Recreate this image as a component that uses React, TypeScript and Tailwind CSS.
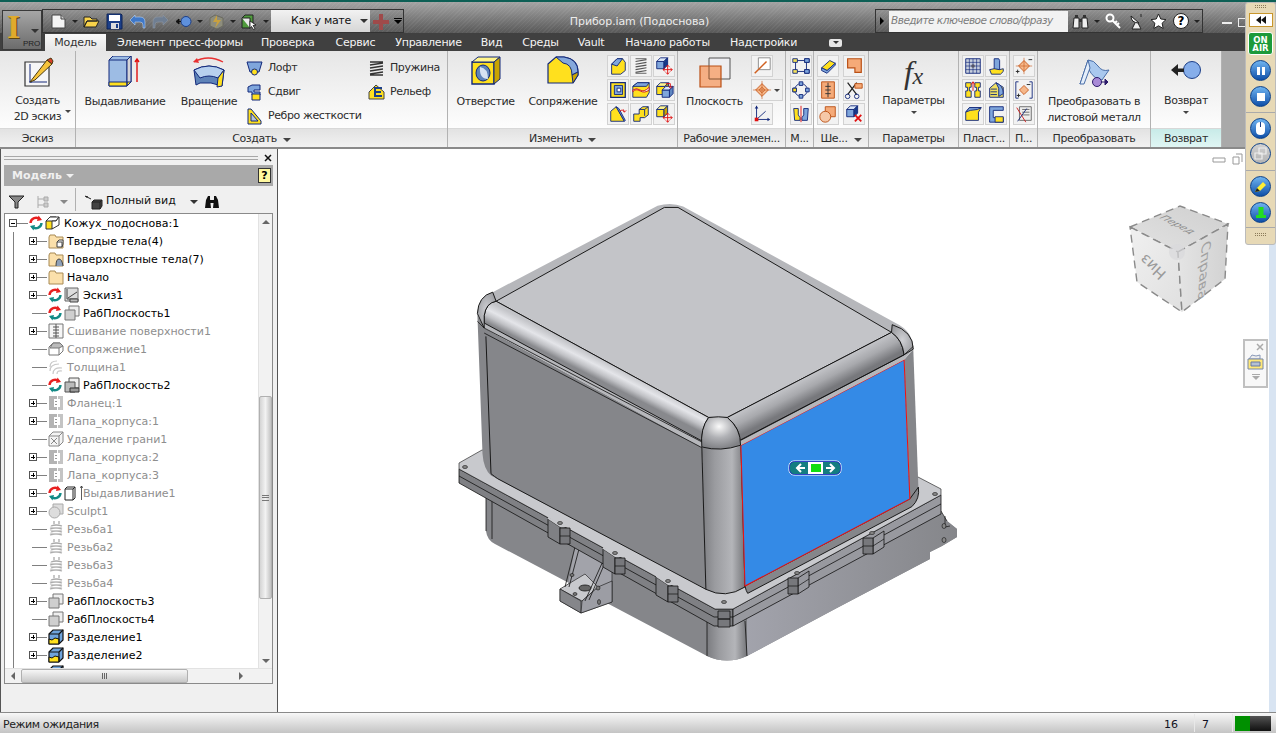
import React from "react";

const N = "#12287a", Y = "#ffe01e", B = "#7fa6dc";

function Cube({ x, y, s, d = 4, f = Y, t = "#fff48a", r = "#c9a400", k = N }: { x: number; y: number; s: number; d?: number; f?: string; t?: string; r?: string; k?: string }) {
  return (
    <g stroke={k} strokeWidth="1" strokeLinejoin="round">
      <path d={`M${x} ${y}h${s}v${s}h-${s}z`} fill={f} />
      <path d={`M${x} ${y}l${d} -${d}h${s}l-${d} ${d}z`} fill={t} />
      <path d={`M${x + s} ${y}l${d} -${d}v${s}l-${d} ${d}z`} fill={r} />
    </g>
  );
}
const Cross = ({ x, y }: { x: number; y: number }) => (
  <path d={`M${x - 5} ${y}h10M${x} ${y - 5}v10M${x - 3} ${y - 2}l-2 2 2 2M${x + 3} ${y - 2}l2 2-2 2M${x - 2} ${y - 3}l2-2 2 2M${x - 2} ${y + 3}l2 2 2-2`} stroke="#e01010" strokeWidth="1" fill="none" />
);

const tileIcons: Record<string, React.ReactNode> = {
  chamfer: <g><path d="M4 9l6-6h6l3 4v9l-5 4H4z" fill={Y} stroke={N} /><path d="M4 9l6-6h6l-6 8z" fill={B} stroke={N} /></g>,
  coil: <g fill="none" stroke="#555"><path d="M5 3h12M5 19h12" /><path d="M5 6l12-2M5 9l12-2M5 12l12-2M5 15l12-2M5 18l12-2" strokeWidth="1.2" /></g>,
  move: <g><Cube x={3} y={6} s={8} f={B} t="#dce8f8" r="#163a8a" /><Cross x={15} y={15} /></g>,
  pocket: <g><path d="M3 3h16v16H3z" fill={Y} stroke={N} strokeWidth="1.4" /><path d="M7 6h9v10H7z" fill={B} stroke={N} /><path d="M10 9h4v4h-4z" fill="#fff" stroke={N} /></g>,
  split: <g><path d="M2 7l5-4h13v11l-3 5H2z" fill={Y} stroke={N} /><path d="M2 7l5-4h13l-3 4z" fill={B} stroke={N} /><path d="M2 11q4-3 8 0t10-3v3q-5 4-10 1t-8 1z" fill="#e8e8e8" stroke="#d01818" /></g>,
  scale: <g><Cube x={3} y={7} s={9} /><Cube x={9} y={11} s={8} f={B} t="#dce8f8" r="#5f86c0" /><path d="M13 4h5v4M16 7l2 2 2-2" stroke="#e01010" fill="none" /></g>,
  draft: <g><path d="M3 8l6-5 9 16H3z" fill={Y} stroke={N} /><path d="M9 3l3 2 7 13-1 1z" fill={B} stroke={N} /><path d="M13 8q3-3 5 1M17 6l1 3 2-2" stroke="#e01010" fill="none" /></g>,
  combine: <g><path d="M3 11h6V6l4-3h6v9l-4 3h-5v4H3z" fill={Y} stroke={N} /><path d="M9 6h6l4-3M15 6v7" stroke={N} fill="none" /></g>,
  move2: <g><Cube x={3} y={6} s={8} /><Cross x={15} y={15} /></g>,
  axis: <g><path d="M7 2h13v13H7z" fill="#fff" stroke="#888" /><path d="M3 19L16 6" stroke="#d06020" strokeWidth="1.6" /></g>,
  point: <g><path d="M11 4l7 7-7 7-7-7z" fill="#f5b78a" stroke="#c85c20" /><path d="M11 8l3 3-3 3-3-3z" fill="none" stroke="#c85c20" /><path d="M11 1v20M1 11h20" stroke="#c85c20" strokeWidth=".7" /></g>,
  ucs: <g><path d="M5 2v15h14M5 17L15 8" stroke="#12287a" fill="none" /><path d="M3 15h4v4H3z" fill="#e01010" /><path d="M5 2l-2 3h4zM20 17l-3-2v4z" fill="#12287a" /></g>,
  rect: <g><path d="M5 5h12v12H5z" fill="none" stroke={N} /><path d="M2 3h5v4H2zM15 3h5v4h-5zM2 15h5v4H2zM15 15h5v4h-5z" fill="#f6e25a" stroke={N} /><path d="M15 3h5v4h-5zM15 15h5v4h-5z" fill={B} stroke={N} /></g>,
  circ: <g><circle cx="11" cy="11" r="7" fill="none" stroke={N} /><path d="M9 2h4v4H9zM2 9h4v4H2zM16 9h4v4h-4zM9 16h4v4H9z" fill={B} stroke={N} /><path d="M2 9h4v4H2z" fill={Y} stroke={N} /></g>,
  mirror: <g><path d="M3 5h5v7l2 3v3H4z" fill={Y} stroke={N} /><path d="M19 5h-5v7l-2 3v3h6z" fill={B} stroke={N} /><path d="M11 2v18" stroke="#e01010" /></g>,
  plate: <g><path d="M4 13l9-8 6 3-9 8z" fill={Y} stroke={N} /><path d="M4 13v3l6 3 9-9V8l-9 8z" fill={B} stroke={N} /></g>,
  lflange: <g><path d="M4 3h15v15h-7v-5H4z" fill="#f5aa78" stroke="#b94f14" strokeWidth="1.3" /></g>,
  doc: <g><path d="M4 2h14v18H4z" fill="#f5aa78" stroke="#b94f14" /><path d="M11 3v16M8 7h6M8 11h6M8 15h6" stroke="#333" /></g>,
  cut: <g><path d="M4 3l10 13M14 3L4 16" stroke="#222" strokeWidth="1.4" /><circle cx="4" cy="18" r="2.5" fill="none" stroke={N} /><circle cx="14" cy="18" r="2.5" fill="none" stroke={N} /><path d="M12 4h8v5h-8z" fill="#f5aa78" stroke="#b94f14" /></g>,
  corner: <g><path d="M8 3h11v11H8z" fill="#f5aa78" stroke="#b94f14" /><circle cx="8" cy="14" r="6" fill="#f5c8a8" stroke="#b94f14" /></g>,
  del: <g><Cube x={3} y={6} s={8} f={B} t="#dce8f8" r="#163a8a" /><path d="M12 12l7 7M19 12l-7 7" stroke="#e01010" strokeWidth="2" /></g>,
  grid: <g><path d="M3 3h16v16H3z" fill="#c6cedc" stroke={N} /><path d="M3 7h16M3 11h16M3 15h16M7 3v16M11 3v16M15 3v16" stroke={N} strokeWidth=".7" /><circle cx="11" cy="11" r="2" fill="#556" /></g>,
  boss: <g><path d="M9 3h5l1 2v10h-6z" fill={B} stroke={N} /><path d="M4 15l5-1 6 1 4-1v3l-3 3H6z" fill={Y} stroke={N} /></g>,
  rules: <g><path d="M3 3h6v5H7v4h2v7H3v-7h2V8H3zM13 3h6v5h-2v4h2v7h-6v-7h2V8h-2z" fill={Y} stroke={N} /><path d="M11 2v10M9 5l2-3 2 3" stroke="#e01010" fill="none" /></g>,
  mold: <g><path d="M4 19V9l7-6 8 5v11z" fill="#f0e060" stroke={N} /><path d="M11 3q8 3 8 12l-5 3V9z" fill={B} stroke={N} /><path d="M5 10h7M5 13h7M5 16h7" stroke={N} /></g>,
  chamf2: <g><path d="M3 9l4-5h13l-3 5v9H3z" fill={Y} stroke={N} /><path d="M3 9l4-5h13l-4 2-8 1z" fill={B} stroke={N} /></g>,
  lip: <g><path d="M4 3h15v4H8v8h11v5H4z" fill={B} stroke={N} /><path d="M10 14h9v6h-9z" fill={Y} stroke={N} /></g>,
  pm: <g><path d="M11 5l6 6-6 6-6-6z" fill="#f5b78a" stroke="#c85c20" /><path d="M11 2v18M2 11h18" stroke="#c85c20" strokeWidth=".7" /><path d="M16 4h4M2 17h4M4 15v4" stroke="#222" /></g>,
  bracket: <g><path d="M11 6l5 5-5 5-5-5z" fill="#f5b78a" stroke="#c85c20" /><path d="M5 2H2v18h3M17 2h3v18h-3" stroke={N} fill="none" /><path d="M14 5h4M3 17h4M5 15v4" stroke="#222" /></g>,
  hatch: <g><path d="M6 3h13v15H6z" fill="#eee" stroke="#666" /><path d="M9 6h8M9 9h8M9 12h8" stroke="#666" /><path d="M3 4l10 16" stroke="#d01818" /><path d="M14 5L4 19" stroke={N} /></g>,
};

const Caret = () => <div className="w-0 h-0 border-x-[3px] border-t-[3px] border-x-transparent border-t-[#444444]" />;

const Tile = ({ n, wide }: { n: string; wide?: boolean }) => (
  <div className={`h-[22px] ${wide ? "w-[32px]" : "w-[22px]"} flex items-center bg-[#f2f2f2] border border-[#d2d2d2]`}>
    <svg width="20" height="20" viewBox="0 0 22 22" className="shrink-0">{tileIcons[n]}</svg>
    {wide && <div className="ml-[2px]"><Caret /></div>}
  </div>
);

const TileGrid = ({ rows, className = "" }: { rows: string[][]; className?: string }) => (
  <div className={`flex flex-col gap-y-[2px] shrink-0 ${className}`}>
    {rows.map((r, i) => (
      <div key={i} className="flex gap-x-[1px]">{r.map((n) => <Tile key={n} n={n} wide={n === "point"} />)}</div>
    ))}
  </div>
);

const Big = ({ icon, lines, caret, w }: { icon: React.ReactNode; lines: string[]; caret?: boolean; w: string }) => (
  <div className={`flex flex-col items-center shrink-0 ${w}`}>
    <div className={`${caret ? "h-[37px]" : "h-[38px]"} flex items-start justify-center`}>{icon}</div>
    {lines.map((l) => <div key={l} className="leading-[16px] whitespace-nowrap">{l}</div>)}
    {caret && <div className="mt-[2px]"><Caret /></div>}
  </div>
);

const Panel = ({ w, title, drop, children, active }: { w: string; title: string; drop?: boolean; children: React.ReactNode; active?: boolean }) => (
  <div className={`${w} shrink-0 flex flex-col border-r border-[#b2b2b2]`}>
    <div className="h-[77px] flex pt-[5px] bg-linear-to-b from-[#e6e6e6] to-[#fdfdfd]">{children}</div>
    <div className={`h-[19px] flex items-center justify-center gap-[6px] pt-[3px] border-t border-[#d8d8d8] whitespace-nowrap ${active ? "bg-linear-to-b from-[#c8ebe8] to-[#e0f6f4]" : "bg-linear-to-b from-[#e2e2e2] to-[#f2f2f2]"}`}>
      <span>{title}</span>
      {drop && <div className="w-0 h-0 border-x-[4px] border-t-[4px] border-x-transparent border-t-[#444444]" />}
    </div>
  </div>
);

const SmallRow = ({ icon, text }: { icon: React.ReactNode; text: string }) => (
  <div className="h-[24px] flex items-center gap-[5px] whitespace-nowrap">
    <svg width="17" height="17" viewBox="0 0 17 17" className="shrink-0">{icon}</svg>
    <span className="pt-[1px]">{text}</span>
  </div>
);

const Sync = () => (
  <svg width="16" height="16" viewBox="0 0 16 16" className="shrink-0">
    <path d="M2.500 8a5.500 5.500 0 0 1 9.500-3.500" stroke="#e82020" strokeWidth="2.400" fill="none" />
    <path d="M10.500 .5l3.500 4.500-5 1z" fill="#e82020" />
    <path d="M13.500 8a5.500 5.500 0 0 1-9.500 3.500" stroke="#138a86" strokeWidth="2.400" fill="none" />
    <path d="M5.500 15.500l-3.500-4.500 5-1z" fill="#138a86" />
  </svg>
);

const folder = (extra?: React.ReactNode) => (
  <g>
    <path d="M1 4l1-2h5l1 2h7v11H1z" fill="#fbe0ab" stroke="#a88a54" />
    {extra}
  </g>
);
const treeIcons: Record<string, React.ReactNode> = {
  part: <g><path d="M1 6l4-4h6v8l-4 4H1z" fill={Y} stroke="#333" /><path d="M5 2h9l-3 4H1z" fill="#fff" stroke="#333" /><path d="M11 6l3-4v8l-7 4v-8z" fill="#fff" stroke="#333" /></g>,
  solid: folder(<path d="M9 9h5v5H9zM9 9l2-2h4v4l-1 3" fill="#fff" stroke="#444" />),
  surf: folder(<path d="M8 15q0-7 3-7t4 7" fill="#8ea0b8" stroke="#444" />),
  folder: folder(),
  sketch: <g><path d="M1 1h13v13H1z" fill="#ddd" stroke="#666" /><path d="M3 2v10M3 12h10M4 11L13 5" stroke="#444" /><path d="M6 12h8v3H6z" fill="#bbb" stroke="#444" /></g>,
  plane: <g><path d="M5 1h10v10H5z" fill="#eee" stroke="#777" /><path d="M1 5h10v10H1z" fill="#cfcfcf" stroke="#777" /></g>,
  plane2: <g><path d="M5 1h10v10H5z" fill="#eee" stroke="#555" /><path d="M1 5h10v10H1z" fill="#bbb" stroke="#555" /><path d="M6 11h9v4H6z" fill="#999" stroke="#333" /></g>,
  stitch: <g><path d="M1 1h14v14H1z" fill="#f6f6f6" stroke="#777" /><path d="M8 1v14M5 4h6M5 7h6M5 10h6M5 13h6" stroke="#555" /></g>,
  fillet: <g><path d="M1 6l4-4h7l3 3v5l-4 4H1z" fill="#fff" stroke="#777" /><path d="M5 2h7l3 3-4 2H2z" fill="#bbb" stroke="#777" /><path d="M11 7v7" stroke="#777" /></g>,
  thick: <g fill="none" stroke="#c8c8c8" strokeWidth="1.200"><path d="M2 8q0-6 7-6M2 12q0-7 9-7M5 15q0-7 9-6M9 15q0-4 5-3" /></g>,
  flange: <g><path d="M1 1h8v3H6v8h3v3H1z" fill="#b4b4b4" /><path d="M10 1h5v14h-5v-3h2V4h-2z" fill="#c4c4c4" /><path d="M7 6h2v1H7zM7 9h2v1H7z" fill="#999" /></g>,
  del: <g><path d="M1 5l4-4h10v10l-4 4H1z" fill="#f4f4f4" stroke="#888" /><path d="M1 5h10v10M11 5l4-4M3 7l6 6M9 7l-6 6" fill="none" stroke="#888" /></g>,
  ext: <g><path d="M1 4l2-2h8v11l-2 2H1z" fill="#fff" stroke="#222" /><path d="M1 4h8v11M9 4l2-2" fill="none" stroke="#222" /></g>,
  sculpt: <g><path d="M5 1h10v10H5z" fill="#ddd" stroke="#aaa" /><circle cx="6.500" cy="9.500" r="5.500" fill="#ddd" stroke="#aaa" /></g>,
  thread: <g fill="none" stroke="#aaa" strokeWidth="1.300"><path d="M6 0v3M11 0v3M3 5q5-2 11 0M2 8q6-2 12 0M3 11q5-2 11 0M2 14q6-2 12 0" /><path d="M2 6q6 2 12 0M2 9q6 2 12 0M2 12q6 2 12 0" stroke="#ccc" /></g>,
  split: <g><path d="M1 5l4-4h10v10l-4 4H1z" fill="#6fa4dc" stroke="#111" strokeWidth="1.200" /><path d="M1 10l3 1 3-2 4 1v5H1z" fill={Y} stroke="#111" /><path d="M11 5l4-4M1 5h10v10" fill="none" stroke="#111" strokeWidth="1.200" /></g>,
};

type Row = { t?: string; i: string; e?: boolean; s?: boolean; d?: boolean; a?: boolean };
const rows: Row[] = [
  { t: "Твердые тела(4)", i: "solid", e: true },
  { t: "Поверхностные тела(7)", i: "surf", e: true },
  { t: "Начало", i: "folder", e: true },
  { t: "Эскиз1", i: "sketch", e: true, s: true },
  { t: "РабПлоскость1", i: "plane", s: true },
  { t: "Сшивание поверхности1", i: "stitch", e: true, d: true },
  { t: "Сопряжение1", i: "fillet", d: true },
  { t: "Толщина1", i: "thick", d: true },
  { t: "РабПлоскость2", i: "plane2", s: true },
  { t: "Фланец:1", i: "flange", e: true, d: true },
  { t: "Лапа_корпуса:1", i: "flange", e: true, d: true },
  { t: "Удаление грани1", i: "del", d: true },
  { t: "Лапа_корпуса:2", i: "flange", e: true, d: true },
  { t: "Лапа_корпуса:3", i: "flange", e: true, d: true },
  { t: "Выдавливание1", i: "ext", e: true, s: true, d: true, a: true },
  { t: "Sculpt1", i: "sculpt", e: true, d: true },
  { t: "Резьба1", i: "thread", d: true },
  { t: "Резьба2", i: "thread", d: true },
  { t: "Резьба3", i: "thread", d: true },
  { t: "Резьба4", i: "thread", d: true },
  { t: "РабПлоскость3", i: "plane", e: true },
  { t: "РабПлоскость4", i: "plane" },
  { t: "Разделение1", i: "split", e: true },
  { t: "Разделение2", i: "split", e: true },
  { i: "split" },
];

const Exp = ({ minus }: { minus?: boolean }) => (
  <div className="w-[8px] h-[8px] border border-[#555555] bg-white flex items-center justify-center relative shrink-0">
    <div className="w-[4px] h-px bg-black" />
    {!minus && <div className="absolute w-px h-[4px] bg-black" />}
  </div>
);

const TreeRow = ({ r }: { r: Row }) => (
  <div className="h-[18px] flex items-center whitespace-nowrap">
    {r.e ? (
      <><div className="w-[15px]" /><Exp /><div className="w-[10px] h-px bg-[#808080]" /></>
    ) : (
      <><div className="w-[18px]" /><div className="w-[15px] h-px bg-[#808080]" /></>
    )}
    {r.s && <Sync />}
    <div className="ml-[1px]">
      <svg width="16" height="16" viewBox="0 0 16 16" className="block">{treeIcons[r.i]}</svg>
    </div>
    {r.a && <svg width="3" height="16" viewBox="0 0 3 16" className="shrink-0"><path d="M1.500 1v14M0 3l1.500-2L3 3" stroke="#333" fill="none" strokeWidth=".8" /></svg>}
    {r.t && <span className={`pt-[2px] ${r.a ? "ml-0" : "ml-[3px]"} ${r.d ? "text-[#8e8e8e]" : "text-black"}`}>{r.t}</span>}
  </div>
);

const Qat = ({ children, w = 17 }: { children: React.ReactNode; w?: number }) => (
  <svg width={w} height="17" viewBox={`0 0 ${w} 17`} className="shrink-0">{children}</svg>
);
const GCaret = () => <div className="w-0 h-0 border-x-[3px] border-t-[3px] border-x-transparent border-t-[#222222] mx-[5px]" />;

const RoundBtn = ({ children, c = "from-[#6fb4f0] to-[#0d4fa8]" }: { children: React.ReactNode; c?: string }) => (
  <div className={`w-[21px] h-[21px] rounded-full border border-[#0b3f88] bg-linear-to-b ${c} flex items-center justify-center shrink-0`}>{children}</div>
);

const Grip = () => (
  <svg width="12" height="4" viewBox="0 0 12 4" className="block"><path d="M0 .5h12M0 2.500h12" stroke="#8a7a58" strokeDasharray="1 1" /></svg>
);

const bossesL = [[565, 537], [620, 567], [673, 595]];
const bossesR = [[868, 547], [793, 587]];

const Lower = () => (
  <g stroke="#111" strokeWidth=".8" strokeLinejoin="round">
    {/* housing */}
    <path d="M486 490V532Q487 541 495 545L707 657Q727 666 747 657L835 610L930 560V553L942 547L957 538V530L947 522L941 513V490L730 600L486 480Z" fill="#85868a" stroke="none" />
    <path d="M747 657L835 610L930 560V553L942 547L957 538V530L947 522L941 513V500L733 612L745 620Z" fill="url(#lr)" stroke="none" />
    <path d="M707 618H747V657Q727 666 707 657Z" fill="url(#fv)" stroke="none" />
    <path d="M707 622V657M745 622L747 657M486 495V532M492 500V540" fill="none" strokeWidth=".8" />
    <path d="M945 517V528L950 527M941 512L947 522" fill="none" strokeWidth=".7" />
    <ellipse cx="944" cy="527" rx="2" ry="2.500" fill="#888" strokeWidth=".6" />
    <ellipse cx="944" cy="541" rx="2" ry="2.500" fill="#888" strokeWidth=".6" />
    {/* bracket */}
    <path d="M575 548L603 562L612 572V603L581 614L560 602V590L568 585Z" fill="#a2a3aa" stroke="none" />
    <path d="M612 572V603L581 614L560 602V590" fill="none" strokeWidth=".6" />
    <path d="M560 590L585 575L598 588L582 602Z" fill="#c8c9cd" strokeWidth=".6" />
    <path d="M560 590V602L581 614V602Z" fill="#85868a" strokeWidth=".6" />
    <path d="M582 602L598 588L612 582V603L581 614Z" fill="#9c9da4" strokeWidth=".6" />
    <path d="M565 588L575 548M569 588L579 550M585 602L603 562M589 601L604 566" fill="none" strokeWidth=".8" />
    <ellipse cx="585" cy="589" rx="6" ry="3" fill="#666" strokeWidth=".8" />
    <ellipse cx="572" cy="576" rx="2" ry="1.500" fill="#777" strokeWidth=".6" />
    <ellipse cx="598" cy="589" rx="2" ry="2" fill="#777" strokeWidth=".6" />
    <ellipse cx="575" cy="595" rx="2" ry="1.500" fill="#777" strokeWidth=".6" />
    <ellipse cx="599" cy="603" rx="1.500" ry="2.500" fill="#777" strokeWidth=".6" />
    {/* flange sides */}
    <path d="M459 470V484L714 627H733V610L715 610Z" fill="#7f8084" />
    <path d="M733 610L941 496V515L733 627Z" fill="#98999f" />
    <path d="M459 477L714 618H733L941 505" fill="none" strokeWidth=".8" />
    {/* flange top */}
    <path d="M459 464L482 451L918 478L941 490V496L733 610H715L459 470Z" fill="#c8c9cd" strokeWidth=".6" />
    {bossesL.map(([x, y]) => (
      <g key={x}>
        <path d={`M${x - 17} ${y - 17}L${x - 5} ${y - 9}V${y + 8}L${x - 17} ${y + 1}Z`} fill="#7f8084" />
        <path d={`M${x - 17} ${y - 19}L${x + 6} ${y - 9}H${x - 5}L${x - 17} ${y - 17}Z`} fill="#c8c9cd" stroke="none" />
        <path d={`M${x - 5} ${y - 8}H${x + 5}V${y + 8}H${x - 5}Z`} fill="#77787c" />
        <path d={`M${x - 5} ${y}H${x + 5}`} fill="none" strokeWidth=".7" />
        <ellipse cx={x - 5} cy={y - 13} rx="2.500" ry="1.500" fill="#8a8a8a" strokeWidth=".6" />
      </g>
    ))}
    {bossesR.map(([x, y]) => (
      <g key={x}>
        <path d={`M${x + 5} ${y - 8}L${x + 16} ${y - 15}V${y + 1}L${x + 5} ${y + 8}Z`} fill="#98999f" />
        <path d={`M${x - 5} ${y - 8}H${x + 5}V${y + 8}H${x - 5}Z`} fill="#77787c" />
        <path d={`M${x - 5} ${y}H${x + 5}L${x + 16} ${y - 7}`} fill="none" strokeWidth=".7" />
        <ellipse cx={x + 4} cy={y - 13} rx="2.500" ry="1.500" fill="#8a8a8a" strokeWidth=".6" />
      </g>
    ))}
    <path d="M718 612H730V620H718ZM718 620H730V628H718Z" fill="#77787c" />
    <ellipse cx="724" cy="603" rx="2.500" ry="1.500" fill="#8a8a8a" strokeWidth=".6" />
    <ellipse cx="465" cy="468" rx="2.500" ry="1.500" fill="#8a8a8a" strokeWidth=".6" />
    <ellipse cx="935" cy="495" rx="2.500" ry="1.500" fill="#8a8a8a" strokeWidth=".6" />
  </g>
);

const Upper = () => (
  <g transform="translate(440 190) scale(.34 .335)" stroke="#111" strokeWidth="2.800" strokeLinejoin="round">
    {/* walls */}
    <path d="M110 375L125 790Q128 835 150 855L782 1195L770 770L130 415Z" fill="#85868a" stroke="none" />
    <path d="M135 440L150 850Q160 858 170 865L782 1195" fill="none" />
    <path d="M770 770L782 1195Q840 1225 897 1188L885 765Z" fill="url(#fv)" />
    <path d="M1365 510L1392 478L1407 890Q1405 915 1382 925Z" fill="#85868a" stroke="none" />
    <path d="M897 1185L1382 925L1407 890Q1412 925 1388 948L905 1207Q900 1200 897 1185Z" fill="#85868a" />
    <path d="M885 765L1365 510L1382 925L897 1185Z" fill="#348ae6" stroke="#ee1111" strokeWidth="3" />
    {/* top silhouette */}
    <path d="M110 372Q112 320 155 308L640 50Q680 38 715 52L1340 400Q1392 425 1392 478L1365 510L885 765L860 778L770 772L130 415Z" fill="#b6b7bb" stroke="none" />
    <path d="M165 335L660 55H700L1328 428L845 682H790Z" fill="#c3c4c8" />
    <path d="M130 378Q135 340 165 335L790 682Q770 710 770 752L130 400Z" fill="url(#fa)" />
    <path d="M845 682Q880 710 882 750L1365 495Q1360 450 1328 428Z" fill="url(#fb)" />
    <path d="M790 682Q820 678 845 682Q885 715 884 765Q825 785 770 770Q765 715 790 682Z" fill="url(#fc)" />
    <path d="M110 372Q112 320 155 308L165 335Q135 340 130 378V415Z" fill="url(#fd)" />
    <path d="M1330 405Q1392 425 1392 478L1365 495Q1360 450 1328 428Z" fill="url(#fd)" />
    <path d="M110 395L130 415L770 755M130 430L770 772M885 750L1365 495L1392 470" fill="none" strokeWidth="2.400" />
  </g>
);

const dashed = { stroke: "#8a8a8a", strokeDasharray: "8 5", strokeWidth: 1.4 };

export default function App() {
  return (
    <div className="w-[1276px] h-[733px] relative overflow-hidden flex flex-col bg-white font-['DejaVu_Sans',sans-serif] text-[11px] text-[#2c2c2c]">
      {/* title bar */}
      <div className="h-[33px] shrink-0 flex items-start border-t-2 border-[#0d5f55] bg-[repeating-linear-gradient(135deg,rgba(255,255,255,.05)_0_1px,transparent_1px_3px),linear-gradient(#a4a4a4,#585858)]">
        <div className="ml-[42px] mt-[7px] h-[24px] w-[362px] border border-[#333333] flex items-center pl-[7px] shrink-0">
          <Qat><path d="M2 2h9l4 4v9H2z" fill="#f4f4f4" stroke="#444" /><path d="M11 2v4h4" fill="#ccc" stroke="#444" /></Qat>
          <GCaret />
          <Qat><path d="M1 14V4h6l2 2h5v2H4l-3 6 3-6h12l-3 6z" fill="#f8d24a" stroke="#222" /></Qat>
          <div className="w-[6px]" />
          <Qat><path d="M1 1h14l1 1v14H1z" fill="#1c3f88" stroke="#0d2256" /><path d="M3 2h11v6H3z" fill="#fff" /><path d="M5 10h8v6H5z" fill="#ddd" /><path d="M10 11h2v4h-2z" fill="#1c3f88" /></Qat>
          <div className="w-[6px]" />
          <Qat><path d="M6 2L1 7l5 5V9h5q3 0 3 3v3h2V9q0-5-5-5H6z" fill="#3f78c8" stroke="#bcd3f2" strokeWidth=".6" /></Qat>
          <div className="w-[6px]" />
          <Qat><path d="M11 2l5 5-5 5V9H6q-3 0-3 3v3H1V9q0-5 5-5h5z" fill="#6f7e92" stroke="#8f98a4" strokeWidth=".6" /></Qat>
          <div className="w-[6px]" />
          <Qat><circle cx="11" cy="8.500" r="5" fill="#5e90dc" stroke="#1c3f88" /><path d="M6 8.500H3M4 6L1 8.500 4 11z" fill="#111" stroke="#111" /></Qat>
          <GCaret />
          <Qat><path d="M2 5l5-3 8 3v8l-6 3-7-3z" fill="#8d8d7d" stroke="#6a6a60" /><path d="M9 2L5 9h4l-2 6 6-8H9z" fill="#c9a13f" /></Qat>
          <GCaret />
          <Qat><path d="M1 5l3-3h8v10l-3 3H1z" fill="#4f9a3c" stroke="#222" /><path d="M1 5h8v10" fill="#e8e8e8" stroke="#222" /><path d="M9 8l6 4-3 .5 2 3-1.500 1-2-3-1.500 2z" fill="#fff" stroke="#111" strokeWidth=".8" /></Qat>
          <GCaret />
          <div className="w-[99px] h-[22px] -ml-[3px] bg-linear-to-b from-[#f2f2f2] to-[#d6d6d6] flex items-center shrink-0">
            <span className="ml-[20px] text-[#111111] tracking-[-0.3px] pt-[1px]">Как у мате</span>
            <div className="ml-auto mr-[2px] w-0 h-0 border-x-[4px] border-t-[4px] border-x-transparent border-t-[#333333]" />
          </div>
          <div className="ml-[2px]"><Qat w={18}><path d="M7 1h4v6h6v4h-6v6H7v-6H1V7h6z" fill="#9f4a4a" /></Qat></div>
          <div className="ml-[4px] flex flex-col gap-[1px] items-center"><div className="w-[8px] h-px bg-black" /><div className="w-0 h-0 border-x-[4px] border-t-[4px] border-x-transparent border-t-black" /></div>
        </div>
        <div className="flex-1 text-center mt-[12px] text-[#ececec] tracking-[-0.1px]">Прибор.iam (Подоснова)</div>
        <div className="mt-[7px] mr-[73px] h-[24px] w-[328px] border border-[#333333] flex items-center pl-[4px] shrink-0">
          <div className="w-0 h-0 border-y-[4px] border-l-[4px] border-y-transparent border-l-black mr-[5px]" />
          <div className="w-[179px] h-[21px] bg-[#f2f2f2] italic text-[#7c7c7c] text-[10.500px] flex items-center pl-[2px] shrink-0 whitespace-nowrap tracking-[-0.5px]">Введите ключевое слово/фразу</div>
          <div className="ml-[4px] flex items-center">
            <Qat><path d="M2 5h5v10H1zM10 5h5l1 10h-6z" fill="#eee" stroke="#222" /><path d="M3 2h3v3H3zM11 2h3v3h-3zM7 6h3v3H7z" fill="#333" /></Qat>
            <GCaret />
            <Qat><circle cx="5" cy="5" r="3.500" fill="none" stroke="#fff" strokeWidth="2" /><path d="M7 7l8 8M12 12l2-2M10 10l2-2" stroke="#fff" strokeWidth="2" /></Qat>
            <div className="w-[6px]" />
            <Qat><path d="M3 3q0 7 8 7zM7 10l-3 6h9l-3-6M13 1v3" fill="#eee" stroke="#222" /></Qat>
            <div className="w-[5px]" />
            <Qat><path d="M8.500 1l2.300 5 5.200.6-3.900 3.600 1.100 5.300-4.700-2.700-4.700 2.700 1.100-5.300L1 6.600 6.200 6z" fill="#fff" stroke="#222" /></Qat>
            <div className="w-[6px]" />
            <div className="w-[16px] h-[16px] rounded-full bg-white border border-[#222222] text-black font-bold text-[12px] flex items-center justify-center">?</div>
            <GCaret />
          </div>
        </div>
      </div>
      {/* logo button */}
      <div className="absolute left-[2px] top-[10px] w-[40px] h-[40px] border border-[#3a3a3a] bg-linear-to-b from-[#a6a6a6] to-[#6c6c6c] z-10">
        <span className="absolute left-[4px] top-[2px] font-['Liberation_Serif',serif] font-bold text-[34px] leading-[28px] text-[#e0aa2c] [text-shadow:1px_1px_0_#5a4410]">I</span>
        <div className="absolute left-[28px] top-[18px] w-0 h-0 border-x-[4px] border-t-[4px] border-x-transparent border-t-[#333333]" />
        <span className="absolute left-[20px] top-[29px] text-[8px] leading-[8px] text-[#222222] font-['Liberation_Sans',sans-serif]">PRO</span>
      </div>
      {/* window buttons */}
      <div className="absolute left-[1222px] top-[18px] flex items-center gap-[6px]">
        <div className="w-[10px] h-[2px] bg-[#eeeeee]" />
        <div className="w-[8px] h-[9px] border border-[#eeeeee]" />
      </div>
      {/* tabs */}
      <div className="h-[18px] shrink-0 bg-[#404040] flex items-end text-[#f4f4f4] pl-[45px] whitespace-nowrap tracking-[-0.25px]">
        <div className="w-[61px] h-[17px] pt-[2px] bg-linear-to-b from-[#f8f8f8] to-[#e6e6e6] text-[#333333] flex items-center justify-center">Модель</div>
        <div className="h-[18px] pt-[3px] flex items-center ml-[11px]">Элемент пресс-формы</div>
        <div className="h-[18px] pt-[3px] flex items-center ml-[18px]">Проверка</div>
        <div className="h-[18px] pt-[3px] flex items-center ml-[21px]">Сервис</div>
        <div className="h-[18px] pt-[3px] flex items-center ml-[20px]">Управление</div>
        <div className="h-[18px] pt-[3px] flex items-center ml-[19px]">Вид</div>
        <div className="h-[18px] pt-[3px] flex items-center ml-[20px]">Среды</div>
        <div className="h-[18px] pt-[3px] flex items-center ml-[19px]">Vault</div>
        <div className="h-[18px] pt-[3px] flex items-center ml-[21px]">Начало работы</div>
        <div className="h-[18px] pt-[3px] flex items-center ml-[20px]">Надстройки</div>
        <div className="h-[18px] pt-[1px] flex items-center ml-[32px]"><div className="w-[13px] h-[8px] rounded-[2px] bg-[#e6e6e6] flex items-center justify-center"><div className="w-0 h-0 border-x-[3px] border-t-[3px] border-x-transparent border-t-[#333333]" /></div></div>
      </div>
      {/* ribbon */}
      <div className="h-[98px] shrink-0 flex bg-[#a9a9a9] border-b-2 border-[#8a8a8a] tracking-[-0.4px]">
        <Panel w="w-[76px]" title="Эскиз">
          <div className="w-full flex flex-col items-center relative">
            <div className="h-[37px]">
              <svg width="32" height="32" viewBox="0 0 32 32"><path d="M3 6h24v24H3z" fill="#f6f6f6" stroke="#333" strokeWidth="1.200" /><path d="M8 8v18h17M7 26h3" stroke="#14287a" fill="none" /><path d="M8 26L25 4l5 4-17 16z" fill="#f6c33a" stroke="#4a3a10" /><path d="M25 4l5 4 1-3-2-3z" fill="#d9402a" stroke="#4a3a10" /></svg>
            </div>
            <div className="leading-[16px]">Создать</div>
            <div className="leading-[16px]">2D эскиз</div>
            <div className="absolute left-[65px] top-[54px]"><Caret /></div>
          </div>
        </Panel>
        <Panel w="w-[372px]" title="Создать" drop>
          <div className="flex pl-[8px]">
            <Big w="w-[82px]" lines={["Выдавливание"]} icon={<svg width="34" height="32" viewBox="0 0 34 32"><path d="M1 4l4-4h18v26l-4 4H1z" fill="#9dbce4" stroke={N} /><path d="M1 4h18v26" fill="none" stroke={N} /><path d="M19 4l4-4v26l-4 4z" fill="#d4d4d8" stroke={N} /><path d="M1 26h18v4H1zM19 26l4 0v0l-4 4z" fill={Y} stroke={N} /><path d="M29 26V4M27 6l2-3 2 3" stroke="#e01010" fill="none" strokeWidth="1.400" /></svg>} />
            <div className="w-[15px]" />
            <Big w="w-[56px]" lines={["Вращение"]} icon={<svg width="34" height="34" viewBox="0 0 34 34"><path d="M2 6q14-8 29 0" stroke="#e83030" fill="none" strokeWidth="1.400" /><path d="M5 2l-4 4 6 1z" fill="#e83030" /><path d="M2 14q15-8 30 0l-2 16-11-3H8l-4 2z" fill="#5e83b8" stroke={N} /><path d="M2 14q15-8 30 0l-6 8q-9-4-18 0z" fill="#b7d0ee" stroke={N} /><path d="M26 22l6-8-2 16-5 1z" fill={Y} stroke={N} /></svg>} />
            <div className="w-[9px]" />
            <div className="w-[122px] flex flex-col">
              <SmallRow text="Лофт" icon={<g><path d="M1 2h15l-3 10H4z" fill={B} stroke={N} /><circle cx="8.500" cy="12" r="3" fill={Y} stroke={N} /></g>} />
              <SmallRow text="Сдвиг" icon={<g><path d="M2 3l4-2h8v5H8v2l6 0v3H6v-3H2z" fill={B} stroke={N} /><path d="M6 10h8v6H6z" fill={Y} stroke={N} /></g>} />
              <SmallRow text="Ребро жесткости" icon={<g><path d="M2 1h3l10 12v3H2z" fill={Y} stroke={N} /><path d="M5 5l7 8H5z" fill="#b7c4da" stroke={N} /></g>} />
            </div>
            <div className="flex flex-col">
              <SmallRow text="Пружина" icon={<g fill="none" stroke="#333" strokeWidth="1.400"><path d="M2 2h13M2 5l13-2M2 8l13-2M2 11l13-2M2 14l13-2M2 15h13" /></g>} />
              <SmallRow text="Рельеф" icon={<g><path d="M1 15V8l7-7 8 7v7z" fill={Y} stroke="#444" /><path d="M6 3h8v2H8v2h5v2H8v2h6v2H6z" fill="#1c3f88" /></g>} />
            </div>
          </div>
        </Panel>
        <Panel w="w-[230px]" title="Изменить" drop>
          <div className="flex pl-[9px]">
            <Big w="w-[57px]" lines={["Отверстие"]} icon={<svg width="30" height="30" viewBox="0 0 30 30"><path d="M1 6h22v22H1z" fill={Y} stroke={N} strokeWidth="1.400" /><path d="M1 6l6-5h22l-6 5z" fill="#fff48a" stroke={N} /><path d="M23 6l6-5v22l-6 5z" fill="#c9a400" stroke={N} /><ellipse cx="12" cy="17" rx="7" ry="8" fill="#5e83b8" stroke={N} /><path d="M9 11q8 1 8 12q-9 0-8-12z" fill="#d6e2f2" /></svg>} />
            <div className="w-[14px]" />
            <Big w="w-[70px]" lines={["Сопряжение"]} icon={<svg width="32" height="30" viewBox="0 0 32 30"><path d="M1 8l8-7h8q14 2 14 15v3l-5 8H1z" fill={Y} stroke={N} strokeWidth="1.200" /><path d="M9 1h8q14 2 14 15l-6 3q0-11-9-12z" fill="#85a8dc" stroke={N} /><path d="M25 19l6-3v3l-5 8z" fill="#c9a400" stroke={N} /></svg>} />
            <TileGrid className="ml-[9px] -mt-[1px]" rows={[["chamfer", "coil", "move"], ["pocket", "split", "scale"], ["draft", "combine", "move2"]]} />
          </div>
        </Panel>
        <Panel w="w-[108px]" title="Рабочие элемен...">
          <div className="flex pl-[8px]">
            <Big w="w-[57px]" lines={["Плоскость"]} icon={<svg width="32" height="32" viewBox="0 0 32 32"><path d="M10 2h21v21H10z" fill="#eeeef2" stroke="#555" /><path d="M1 10h21v21H1z" fill="#f5a778" fillOpacity=".9" stroke="#b94f14" strokeWidth="1.200" /><path d="M10 10v13h12" fill="none" stroke="#8a5a3a" /></svg>} />
            <TileGrid className="ml-[8px] -mt-[1px]" rows={[["axis"], ["point"], ["ucs"]]} />
          </div>
        </Panel>
        <Panel w="w-[28px]" title="М...">
          <TileGrid className="ml-[4px] -mt-[1px]" rows={[["rect"], ["circ"], ["mirror"]]} />
        </Panel>
        <Panel w="w-[55px]" title="Ше..." drop>
          <div className="flex ml-[3px] -mt-[1px] gap-x-[4px]">
            <TileGrid rows={[["plate"], ["doc"], ["corner"]]} />
            <TileGrid rows={[["lflange"], ["cut"], ["del"]]} />
          </div>
        </Panel>
        <Panel w="w-[90px]" title="Параметры">
          <div className="w-full">
            <Big w="w-full" caret lines={["Параметры"]} icon={<div className="font-['Liberation_Serif',serif] italic text-[#333333] text-[32px] leading-[32px] flex items-end">f<span className="text-[24px] leading-[24px]">x</span></div>} />
          </div>
        </Panel>
        <Panel w="w-[51px]" title="Пласт...">
          <div className="flex ml-[3px] -mt-[1px]"><TileGrid rows={[["grid", "boss"], ["rules", "mold"], ["chamf2", "lip"]]} /></div>
        </Panel>
        <Panel w="w-[28px]" title="П...">
          <TileGrid className="ml-[3px] -mt-[1px]" rows={[["pm"], ["bracket"], ["hatch"]]} />
        </Panel>
        <Panel w="w-[113px]" title="Преобразовать">
          <div className="w-full">
            <Big w="w-full" lines={["Преобразовать в", "листовой металл"]} icon={<svg width="32" height="32" viewBox="0 0 32 32"><path d="M2 28l8-24q6 0 10 6t11 4l-7 10q-8 0-14-12z" fill="#a9c8ee" stroke="#4a6ea8" /><path d="M2 28l8-24 2 8-6 16z" fill="#e4eefa" stroke="#4a6ea8" /><circle cx="19" cy="26" r="4.500" fill="#a88ad6" stroke="#2c1a6a" /><path d="M23 26h7M27 23l3 3-3 3z" fill="#2c1a6a" stroke="#2c1a6a" /></svg>} />
          </div>
        </Panel>
        <Panel w="w-[71px]" title="Возврат" active>
          <div className="w-full">
            <Big w="w-full" caret lines={["Возврат"]} icon={<svg width="32" height="22" viewBox="0 0 32 22" className="mt-[4px]"><circle cx="22" cy="10" r="8.500" fill="#86aeea" stroke="#1c3f88" /><path d="M14 8.500H8V4L1 10l7 6v-4h6z" fill="#222" /></svg>} />
          </div>
        </Panel>
      </div>
      {/* main */}
      <div className="flex-1 flex min-h-0">
        <div className="w-[278px] shrink-0 bg-[#f0f0f0] border-l border-r border-[#555555] flex flex-col pl-[3px] pr-[4px]">
          <div className="h-[15px] flex items-center shrink-0 mt-[1px]">
            <div className="flex-1 h-[4px] border-y border-[#a8a8a8]" />
            <svg width="8" height="8" viewBox="0 0 8 8" className="ml-[6px] mr-[1px]"><path d="M1 1l6 6M7 1L1 7" stroke="#111" strokeWidth="1.500" /></svg>
          </div>
          <div className="h-[21px] bg-[#a9a9a9] flex items-center pl-[8px] shrink-0 text-[#f0f0f0] font-bold">
            <span className="pt-[2px]">Модель</span>
            <div className="ml-[4px] w-0 h-0 border-x-[4px] border-t-[4px] border-x-transparent border-t-[#f0f0f0]" />
            <div className="ml-auto mr-[2px] w-[13px] h-[15px] bg-[#fff8a0] border border-[#333333] text-black text-[11px] leading-[13px] text-center">?</div>
          </div>
          <div className="h-[27px] flex items-center shrink-0 pl-[4px] pt-[4px]">
            <svg width="17" height="14" viewBox="0 0 17 14"><path d="M1 1h15L10 7v6H7V7z" fill="#888" stroke="#222" /></svg>
            <svg width="16" height="14" viewBox="0 0 16 14" className="ml-[11px]"><path d="M2 1v12M2 4h6M2 10h6M8 2h4v4H8zM8 8h4v4H8z" stroke="#aaa" fill="#ccc" /></svg>
            <div className="ml-[8px] w-0 h-0 border-x-[4px] border-t-[4px] border-x-transparent border-t-[#888888]" />
            <div className="ml-[7px] w-px h-[23px] -mt-[4px] bg-[#b0b0b0]" />
            <svg width="20" height="16" viewBox="0 0 20 16" className="ml-[8px]"><path d="M1 2l6 3" stroke="#222" fill="none" /><path d="M1 2l3 0-1 2z" fill="#222" /><path d="M8 8h8v7H8zM8 8l2-2h8l-2 2M16 8l2-2v6l-2 3" fill="#444" stroke="#222" /></svg>
            <span className="ml-[2px] text-[#111111]">Полный вид</span>
            <div className="ml-[14px] w-0 h-0 border-x-[4px] border-t-[4px] border-x-transparent border-t-[#333333]" />
            <svg width="16" height="14" viewBox="0 0 16 14" className="ml-[6px]"><path d="M4 1h2v3l1 9H1l1-8zM10 1h2l2 4 1 8H9l1-9zM6 5h4v3H6z" fill="#111" /></svg>
          </div>
          <div className="h-[471px] shrink-0 bg-white border border-[#8a8a8a] flex flex-col overflow-hidden">
            <div className="flex flex-1 min-h-0">
              <div className="flex-1 min-w-0 overflow-hidden">
                <div className="h-[18px] flex items-center whitespace-nowrap pl-[4px]">
                  <Exp minus />
                  <div className="w-[11px] h-px bg-[#808080]" />
                  <Sync />
                  <svg width="16" height="16" viewBox="0 0 16 16" className="ml-[1px]">{treeIcons.part}</svg>
                  <span className="ml-[3px] text-black pt-[2px]">Кожух_подоснова:1</span>
                </div>
                <div className="ml-[8px] border-l border-[#808080]">
                  {rows.map((r, i) => <TreeRow key={i} r={r} />)}
                </div>
              </div>
              <div className="w-[14px] shrink-0 bg-[#f2f2f2] border-l border-[#e2e2e2] flex flex-col items-center">
                <div className="mt-[6px] w-0 h-0 border-x-[4px] border-b-[4px] border-x-transparent border-b-[#666666]" />
                <div className="mt-[172px] w-full h-[203px] bg-linear-to-r from-[#d4d4d4] via-[#f2f2f2] to-[#c2c2c2] border border-[#b0b0b0] rounded-[2px] flex items-center justify-center">
                  <div className="w-[7px] h-[6px] border-y border-[#777777] flex items-center"><div className="w-full h-px bg-[#777777]" /></div>
                </div>
                <div className="mt-[60px] w-0 h-0 border-x-[4px] border-t-[4px] border-x-transparent border-t-[#666666]" />
              </div>
            </div>
            <div className="h-[15px] shrink-0 bg-[#f2f2f2] border-t border-[#e2e2e2] flex items-center">
              <div className="ml-[6px] w-0 h-0 border-y-[4px] border-r-[4px] border-y-transparent border-r-[#666666]" />
              <div className="ml-[6px] w-[167px] h-[14px] bg-linear-to-b from-[#f6f6f6] to-[#c8c8c8] border border-[#b0b0b0] rounded-[2px] flex items-center justify-center gap-[1px]">
                <div className="w-px h-[6px] bg-[#666666]" /><div className="w-px h-[6px] bg-[#666666]" /><div className="w-px h-[6px] bg-[#666666]" />
              </div>
              <div className="ml-[51px] w-0 h-0 border-y-[4px] border-l-[4px] border-y-transparent border-l-[#666666]" />
            </div>
          </div>
        </div>
        <div className="flex-1 relative min-w-0 bg-white border-r-[7px] border-[#d8e4f2]">
          <svg className="absolute inset-0" width="992" height="563" viewBox="278 150 992 563">
            <defs>
              <linearGradient id="fv" x1="0" x2="1" y1="0" y2="0"><stop offset="0" stopColor="#7b7c80" /><stop offset=".3" stopColor="#9a9b9f" /><stop offset=".7" stopColor="#b4b5b9" /><stop offset="1" stopColor="#75767a" /></linearGradient>
              <linearGradient id="lr" x1="0" x2="1" y1="0" y2="0"><stop offset="0" stopColor="#a4a5ae" /><stop offset="1" stopColor="#85868a" /></linearGradient>
              <linearGradient id="fa" gradientUnits="userSpaceOnUse" x1="480" y1="510" x2="453" y2="562"><stop offset="0" stopColor="#c3c4c8" /><stop offset=".4" stopColor="#e4e5e9" /><stop offset=".7" stopColor="#c0c1c5" /><stop offset="1" stopColor="#88898d" /></linearGradient>
              <linearGradient id="fb" gradientUnits="userSpaceOnUse" x1="1100" y1="548" x2="1130" y2="605"><stop offset="0" stopColor="#c3c4c8" /><stop offset=".5" stopColor="#a8a9ad" /><stop offset="1" stopColor="#77787c" /></linearGradient>
              <radialGradient id="fc" cx=".45" cy=".3" r=".7"><stop offset="0" stopColor="#fafafa" /><stop offset=".5" stopColor="#b0b1b5" /><stop offset="1" stopColor="#808185" /></radialGradient>
              <radialGradient id="fd" cx=".5" cy=".5" r=".7"><stop offset="0" stopColor="#d0d1d5" /><stop offset="1" stopColor="#8f9094" /></radialGradient>
              <linearGradient id="cl" x1="0" x2="1" y1="0" y2="1"><stop offset="0" stopColor="#f0f0f0" /><stop offset="1" stopColor="#e0e0e0" /></linearGradient>
              <linearGradient id="cr" x1="0" x2="1" y1="0" y2="0"><stop offset="0" stopColor="#e4e4e4" /><stop offset="1" stopColor="#d2d2d2" /></linearGradient>
              <linearGradient id="ct" x1="0" x2="1" y1="1" y2="0"><stop offset="0" stopColor="#e2e2e2" /><stop offset="1" stopColor="#cfcfcf" /></linearGradient>
            </defs>
            <path d="M1213 159h12v4h-12z" fill="#fff" stroke="#999" />
            <path d="M1236 155h6v8M1233 158h6v7h-6z" fill="#fff" stroke="#999" />
            <Lower />
            <Upper />
            {/* nav widget */}
            <g>
              <rect x="789" y="462" width="52" height="14" rx="5" fill="#147d80" stroke="#fff" />
              <rect x="789.500" y="462.500" width="51" height="13" rx="5" fill="none" stroke="#1010cc" strokeWidth=".7" />
              <rect x="808" y="463" width="15" height="12" fill="#fff" />
              <rect x="811" y="465" width="10" height="8" fill="#11dd11" />
              <path d="M805 469h-8M801 465l-4 4 4 4M826 469h8M830 465l4 4-4 4" stroke="#fff" strokeWidth="2" fill="none" />
            </g>
            {/* view cube */}
            <path d="M1130 228L1180 207L1228 225L1178 253Z" fill="url(#ct)" {...dashed} />
            <path d="M1130 228L1178 253L1182 313L1137 283Z" fill="url(#cl)" {...dashed} />
            <path d="M1178 253L1228 225L1225 280L1182 313Z" fill="url(#cr)" {...dashed} />
            <circle cx="1177" cy="253" r="8" fill="#d8d8dc" fillOpacity=".7" />
            <text transform="matrix(.68 .35 -.6 .34 1159 219)" fontFamily="DejaVu Sans" fontSize="14" fill="#8e8e8e" fontStyle="italic">Перед</text>
            <text transform="matrix(-.08 1.08 -.9 .5 1202 245)" fontFamily="DejaVu Sans" fontSize="14" fill="#a0a0a0">Справа</text>
            <text transform="translate(1167 274) rotate(223)" fontFamily="DejaVu Sans" fontSize="15" fill="#999999">Низ</text>
          </svg>
          <div className="absolute left-[965px] top-[190px] w-[25px] h-[49px] bg-[#f8f8f8] border-2 border-[#c0c0c0] flex flex-col items-center">
            <svg width="8" height="8" viewBox="0 0 8 8" className="ml-[8px] mt-[2px]"><path d="M1 1l6 6M7 1L1 7" stroke="#aaa" strokeWidth="1.500" /></svg>
            <svg width="17" height="17" viewBox="0 0 17 17" className="mt-[2px]"><path d="M2 6l3-4 4 1 4-1v4z" fill="#eee" stroke="#8898b8" /><path d="M1 6h15v10H1z" fill="#ffe878" stroke="#7888a8" /><path d="M4 9h9v4H4z" fill="#b4c0d4" stroke="#6878a0" /></svg>
            <div className="mt-[4px] w-[8px] h-px bg-[#aaaaaa]" />
            <div className="mt-px w-0 h-0 border-x-[4px] border-t-[4px] border-x-transparent border-t-[#aaaaaa]" />
          </div>
        </div>
      </div>
      {/* status bar */}
      <div className="h-[21px] shrink-0 flex items-center border-t border-[#8a8a8a] bg-linear-to-b from-[#f8f8f8] to-[#c4c4c4] text-[#222222]">
        <span className="ml-[3px] tracking-[-0.4px] pt-[5px]">Режим ожидания</span>
        <span className="ml-auto text-[#111122] pt-[5px]">16</span>
        <div className="ml-[16px] w-px h-[18px] bg-[#e8e8e8]" />
        <span className="ml-[7px] text-[#111122] pt-[5px]">7</span>
        <div className="ml-[23px] w-px h-[18px] bg-[#e8e8e8]" />
        <div className="ml-[2px] w-[15px] h-[15px] bg-[#008f00]" />
        <div className="w-[21px] h-[15px] bg-linear-to-b from-[#555555] to-[#111111]" />
        <div className="w-[5px]" />
      </div>
      {/* floating toolbar */}
      <div className="absolute left-[1245px] top-[2px] w-[31px] h-[243px] bg-[#e7d9b6] border border-[#bbbbbb] rounded-[3px] flex flex-col items-center pt-[2px]">
        <Grip />
        <div className="mt-[4px] w-[24px] h-[14px] bg-white border border-[#c8962c] flex items-center justify-center text-black">
          <svg width="12" height="8" viewBox="0 0 12 8"><path d="M6 0v8L1 4zM11 0v8L6 4z" fill="#111" /></svg>
        </div>
        <div className="mt-[5px] w-[25px] h-[23px] rounded-[3px] bg-[#1c9a3a] border border-white text-white font-bold text-[8.500px] leading-[8px] flex flex-col items-center justify-center">
          <span>ON</span><span>AIR</span>
        </div>
        <div className="mt-[5px]"><RoundBtn><div className="flex gap-[2px]"><div className="w-[3px] h-[8px] bg-white" /><div className="w-[3px] h-[8px] bg-white" /></div></RoundBtn></div>
        <div className="mt-[5px]"><RoundBtn><div className="w-[8px] h-[8px] bg-white" /></RoundBtn></div>
        <div className="mt-[5px] w-full h-px bg-[#aaaaaa]" />
        <div className="mt-[5px]"><RoundBtn><svg width="11" height="15" viewBox="0 0 11 15"><path d="M1 5q0-4 4.500-4T10 5v5q0 4-4.500 4T1 10z" fill="#fff" /><path d="M5.500 1v5" stroke="#1c3f88" /></svg></RoundBtn></div>
        <div className="mt-[4px]"><RoundBtn c="from-[#d0d0d0] to-[#b4b4b4]"><svg width="13" height="13" viewBox="0 0 13 13"><path d="M5 1h7v6H5zM1 6h7v6H1z" fill="none" stroke="#eee" strokeWidth="1.200" /></svg></RoundBtn></div>
        <div className="mt-[6px] w-full h-px bg-[#aaaaaa]" />
        <div className="mt-[5px]"><RoundBtn><svg width="13" height="13" viewBox="0 0 13 13"><path d="M1 12l2-4 6-6 3 3-6 6z" fill="#ffee33" /><path d="M1 12l2-4 3 3z" fill="#222" /></svg></RoundBtn></div>
        <div className="mt-[5px]"><RoundBtn><svg width="12" height="14" viewBox="0 0 12 14"><path d="M3.500 1h5v8h-5z" fill="#22dd22" /><path d="M1 9h10v3H1z" fill="#22dd22" /></svg></RoundBtn></div>
        <div className="mt-[4px] w-full h-px bg-[#aaaaaa]" />
        <div className="mt-[5px]"><Grip /></div>
      </div>
    </div>
  );
}
